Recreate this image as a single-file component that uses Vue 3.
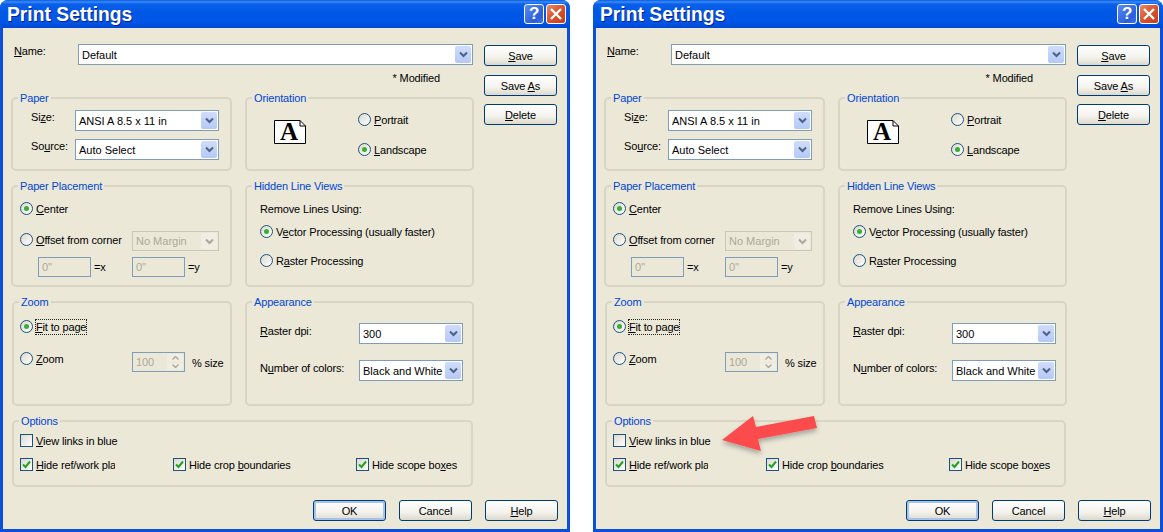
<script setup>
const dialogs = [{ id: 1, arrow: false }, { id: 2, arrow: true }]
</script>

<template>
  <div class="page">
    <section v-for="d in dialogs" :key="d.id" class="window">
      <header class="titlebar">
        <h1 class="title">Print Settings</h1>
        <div class="caption-btn help-btn">?</div>
        <div class="caption-btn close-btn">
          <svg width="14" height="14" viewBox="0 0 14 14"><path d="M2 2 L12 12 M12 2 L2 12" stroke="#fff" stroke-width="2.4" fill="none" /></svg>
        </div>
      </header>

      <div class="client">
        <div class="main">
          <div class="left">
            <div class="name-row">
              <span class="name-label"><u>N</u>ame:</span>
              <div class="combo name-combo"><span>Default</span><i class="drop"><svg width="9" height="7" viewBox="0 0 9 7"><path d="M1 1.5 L4.5 5 L8 1.5" /></svg></i></div>
            </div>
            <div class="modified">* Modified</div>

            <div class="groups">
              <fieldset class="group">
                <legend>Paper</legend>
                <div class="paper">
                  <div class="field-row">
                    <span class="field-label">Si<u>z</u>e:</span>
                    <div class="combo w144"><span>ANSI A 8.5 x 11 in</span><i class="drop"><svg width="9" height="7" viewBox="0 0 9 7"><path d="M1 1.5 L4.5 5 L8 1.5" /></svg></i></div>
                  </div>
                  <div class="field-row">
                    <span class="field-label">So<u>u</u>rce:</span>
                    <div class="combo w144"><span>Auto Select</span><i class="drop"><svg width="9" height="7" viewBox="0 0 9 7"><path d="M1 1.5 L4.5 5 L8 1.5" /></svg></i></div>
                  </div>
                </div>
              </fieldset>

              <fieldset class="group">
                <legend>Orientation</legend>
                <div class="orientation">
                  <svg class="sheet" width="32" height="24" viewBox="0 0 32 24">
                    <path d="M.5.5H26L31.5 6V23.5H.5Z" fill="#fff" stroke="#000" />
                    <path d="M26 .5V6H31.5" fill="none" stroke="#000" />
                    <text x="15" y="19.5" text-anchor="middle" class="sheet-letter">A</text>
                  </svg>
                  <div class="orient-radios">
                    <label class="radio"><span class="dot"></span><span><u>P</u>ortrait</span></label>
                    <label class="radio"><span class="dot on"></span><span><u>L</u>andscape</span></label>
                  </div>
                </div>
              </fieldset>

              <fieldset class="group">
                <legend>Paper Placement</legend>
                <div class="placement">
                  <label class="radio"><span class="dot on"></span><span><u>C</u>enter</span></label>
                  <div class="offset-row">
                    <label class="radio offset-radio"><span class="dot"></span><span><u>O</u>ffset from corner</span></label>
                    <div class="combo disabled w87"><span>No Margin</span><i class="drop"><svg width="9" height="7" viewBox="0 0 9 7"><path d="M1 1.5 L4.5 5 L8 1.5" /></svg></i></div>
                  </div>
                  <div class="xy-row">
                    <div class="entry">0''</div><span class="xy-label">=x</span>
                    <div class="entry">0''</div><span class="xy-label">=y</span>
                  </div>
                </div>
              </fieldset>

              <fieldset class="group">
                <legend>Hidden Line Views</legend>
                <div class="hidden-lines">
                  <div class="remove-label">Remove Lines Using:</div>
                  <label class="radio vector"><span class="dot on"></span><span>V<u>e</u>ctor Processing (usually faster)</span></label>
                  <label class="radio raster"><span class="dot"></span><span>R<u>a</u>ster Processing</span></label>
                </div>
              </fieldset>

              <fieldset class="group inset">
                <legend>Zoom</legend>
                <div class="zoom">
                  <label class="radio"><span class="dot on"></span><span class="focus"><u>F</u>it to page</span></label>
                  <div class="zoom-row">
                    <label class="radio zoom-radio"><span class="dot"></span><span><u>Z</u>oom</span></label>
                    <div class="entry spinner">
                      <span>100</span>
                      <div class="spin">
                        <i><svg width="7" height="4" viewBox="0 0 7 4"><path d="M.5 3.5 L3.5 .5 L6.5 3.5" /></svg></i>
                        <i><svg width="7" height="4" viewBox="0 0 7 4"><path d="M.5 .5 L3.5 3.5 L6.5 .5" /></svg></i>
                      </div>
                    </div>
                    <span class="size-label">% size</span>
                  </div>
                </div>
              </fieldset>

              <fieldset class="group">
                <legend>Appearance</legend>
                <div class="appearance">
                  <div class="app-row">
                    <span class="app-label"><u>R</u>aster dpi:</span>
                    <div class="combo w104"><span>300</span><i class="drop"><svg width="9" height="7" viewBox="0 0 9 7"><path d="M1 1.5 L4.5 5 L8 1.5" /></svg></i></div>
                  </div>
                  <div class="app-row">
                    <span class="app-label">N<u>u</u>mber of colors:</span>
                    <div class="combo w104"><span>Black and White</span><i class="drop"><svg width="9" height="7" viewBox="0 0 9 7"><path d="M1 1.5 L4.5 5 L8 1.5" /></svg></i></div>
                  </div>
                </div>
              </fieldset>

              <fieldset class="group inset options-group">
                <legend>Options</legend>
                <div class="options">
                  <label class="check"><span class="box"></span><span><u>V</u>iew links in blue</span></label>
                  <div class="check-grid">
                    <label class="check"><span class="box"><svg width="11" height="11" viewBox="0 0 11 11"><path d="M2 5.5 L4.5 8 L9 2.5" /></svg></span><span class="clip"><u>H</u>ide ref/work planes</span></label>
                    <label class="check"><span class="box"><svg width="11" height="11" viewBox="0 0 11 11"><path d="M2 5.5 L4.5 8 L9 2.5" /></svg></span><span>Hide crop <u>b</u>oundaries</span></label>
                    <label class="check"><span class="box"><svg width="11" height="11" viewBox="0 0 11 11"><path d="M2 5.5 L4.5 8 L9 2.5" /></svg></span><span>Hide scope bo<u>x</u>es</span></label>
                  </div>
                </div>
              </fieldset>
            </div>
          </div>

          <div class="side-buttons">
            <button class="btn"><u>S</u>ave</button>
            <button class="btn">Save <u>A</u>s</button>
            <button class="btn"><u>D</u>elete</button>
          </div>
        </div>

        <footer class="footer">
          <button class="btn default">OK</button>
          <button class="btn">Cancel</button>
          <button class="btn"><u>H</u>elp</button>
        </footer>
      </div>

      <svg v-if="d.arrow" class="arrow" width="110" height="50" viewBox="0 0 110 50">
        <defs>
          <filter id="arrow-shadow" x="-20%" y="-30%" width="140%" height="170%">
            <feDropShadow dx="0" dy="3" stdDeviation="2.5" flood-color="#000" flood-opacity=".3" />
          </filter>
        </defs>
        <path d="M2 26 L33 2 L36 13 L94 2 L97 14 L38 25 L41 37 Z" fill="#fb4b4e" filter="url(#arrow-shadow)" />
      </svg>
    </section>
  </div>
</template>

<style>
html, body { background: #fff; overflow: hidden; }
</style>

<style scoped>
.page {
  width: 1163px;
  height: 532px;
  display: flex;
  justify-content: space-between;
  font: 11px/14px "Liberation Sans", Arial, sans-serif;
  letter-spacing: -0.15px;
  color: #000;
  background: #fff;
}
.window {
  position: relative;
  width: 570px;
  height: 532px;
  display: flex;
  flex-direction: column;
  background: #0a4fdd;
  border-radius: 8px 8px 0 0;
  overflow: hidden;
}
.titlebar {
  height: 28px;
  flex: none;
  display: flex;
  align-items: center;
  gap: 2px;
  padding: 2px 4px 0 7px;
  box-sizing: border-box;
  background: linear-gradient(#0a5ae6 0, #3a8cf6 2px, #0a60ea 4px, #0058e6 12px, #0055e5 22px, #0048d6 28px);
}
.title {
  flex: 1;
  margin: 0;
  font: bold 19.3px/24px "Liberation Sans", Arial, sans-serif;
  letter-spacing: 0;
  color: #fff;
  text-shadow: 1px 1px 0 #0c1f8c;
}
.caption-btn {
  width: 20px;
  height: 20px;
  margin-top: -2px;
  box-sizing: border-box;
  border: 1px solid #fff;
  border-radius: 3px;
  display: flex;
  align-items: center;
  justify-content: center;
  color: #fff;
}
.help-btn {
  background: linear-gradient(135deg, #5a8cf2, #2a5fdc 70%, #3e74e6);
  font: bold 17px/18px "Liberation Sans", Arial, sans-serif;
}
.close-btn { background: linear-gradient(135deg, #ea8a66, #d8542e 50%, #c43d18); }
.client {
  flex: 1;
  margin: 0 3px 3px;
  background: #ebe8d8;
  padding: 16px 9px 8px 8px;
  display: flex;
  flex-direction: column;
  justify-content: space-between;
}
.main {
  display: grid;
  grid-template-columns: 463px 73px;
  column-gap: 10px;
}
.name-row { display: flex; height: 21px; }
.name-label { width: 64px; margin-left: 3px; }
.name-combo { flex: 1; margin-right: 1px; }
.modified { height: 26px; padding: 6px 34px 0 0; box-sizing: border-box; text-align: right; }

.combo {
  box-sizing: border-box;
  height: 21px;
  display: flex;
  align-items: center;
  justify-content: space-between;
  padding: 1px 1px 1px 3px;
  background: #fff;
  border: 1px solid #7f9db9;
  white-space: nowrap;
  letter-spacing: 0;
}
.w144 { width: 144px; }
.w104 { width: 104px; }
.w87 { width: 87px; height: 20px; }
.drop {
  flex: none;
  width: 16px;
  align-self: stretch;
  display: flex;
  align-items: center;
  justify-content: center;
  border-radius: 2px;
  background: linear-gradient(#d0dcfb, #b5c9f7);
}
.drop path { fill: none; stroke: #4d6185; stroke-width: 2; }
.combo.disabled { background: #ebe8d8; border-color: #c9c7ba; color: #aca899; }
.combo.disabled .drop { background: #f0eee2; }
.combo.disabled .drop path { stroke: #aca899; }

.groups {
  display: grid;
  grid-template-columns: 221px 229px;
  grid-template-rows: 80px 108px 111px 73px;
  column-gap: 13px;
  row-gap: 8px;
}
.group {
  margin: 0;
  min-width: 0;
  padding: 0;
  box-sizing: border-box;
  border: 2px solid #d8d5c4;
  border-radius: 5px;
}
legend {
  margin-left: 5px;
  padding: 0 2px;
  color: #0046d5;
  line-height: 14px;
}
.inset { margin-left: 1px; }

.paper { padding: 5px 0 0 18px; }
.field-row { display: flex; height: 21px; margin-bottom: 8px; }
.field-label { width: 44px; line-height: 14px; }

.orientation { padding-left: 27px; display: flex; align-items: flex-start; }
.sheet { margin-top: 15px; flex: none; overflow: visible; }
.sheet-letter { font: bold 25px "Liberation Serif", serif; fill: #000; letter-spacing: 0; }
.orient-radios { margin: 7px 0 0 52px; display: flex; flex-direction: column; gap: 15px; }

.radio, .check { display: flex; align-items: center; gap: 3px; height: 15px; white-space: nowrap; }
.dot {
  flex: none;
  width: 13px;
  height: 13px;
  box-sizing: border-box;
  border: 1px solid #1c5180;
  border-radius: 50%;
  background: linear-gradient(135deg, #dcd8cb, #fff);
  display: flex;
  align-items: center;
  justify-content: center;
}
.dot.on::after {
  content: "";
  width: 5px;
  height: 5px;
  border-radius: 50%;
  background: #35b035;
}
.box {
  flex: none;
  width: 13px;
  height: 13px;
  box-sizing: border-box;
  border: 1px solid #1c5180;
  background: linear-gradient(135deg, #dcd8cb, #fff);
  display: flex;
  align-items: center;
  justify-content: center;
}
.box path { fill: none; stroke: #21a121; stroke-width: 2; }

.placement { padding: 8px 0 0 7px; }
.offset-row { display: flex; align-items: flex-start; margin-top: 15px; height: 20px; }
.offset-radio { width: 112px; margin-top: 1px; }
.xy-row { display: flex; align-items: center; margin: 6px 0 0 18px; }
.entry {
  box-sizing: border-box;
  width: 53px;
  height: 20px;
  padding: 1px 3px;
  line-height: 16px;
  border: 1px solid #7f9db9;
  color: #aca899;
}
.xy-label { width: 41px; padding-left: 3px; box-sizing: border-box; }

.hidden-lines { padding: 9px 0 0 13px; }
.vector { margin-top: 8px; }
.raster { margin-top: 14px; }

.zoom { padding: 10px 0 0 6px; }
.focus { outline: 1px dotted #222; outline-offset: 0; }
.zoom-row { display: flex; align-items: flex-start; margin-top: 17px; }
.zoom-radio { width: 112px; }
.spinner { display: flex; justify-content: space-between; padding: 1px 1px 1px 3px; margin-top: 1px; }
.spin { width: 16px; display: flex; flex-direction: column; gap: 1px; }
.spin i {
  flex: 1;
  display: flex;
  align-items: center;
  justify-content: center;
  background: #f0eee2;
}
.spin path { fill: none; stroke: #aca899; stroke-width: 1.4; }
.size-label { margin: 5px 0 0 7px; }

.appearance { padding: 14px 0 0 13px; }
.app-row { display: flex; height: 21px; margin-bottom: 16px; }
.app-label { width: 99px; line-height: 14px; padding-top: 1px; }

.options-group { grid-column: 1 / -1; margin-right: 1px; }
.options { padding: 5px 0 0 6px; }
.check-grid { display: grid; grid-template-columns: 153px 183px 1fr; margin-top: 9px; }
.clip { width: 79px; overflow: hidden; }

.side-buttons { display: flex; flex-direction: column; gap: 8px; padding-top: 1px; }
.side-buttons .btn:first-child { margin-bottom: 1px; }
.btn {
  width: 73px;
  height: 21px;
  padding: 0;
  box-sizing: border-box;
  border: 1px solid #003c74;
  border-radius: 3px;
  background: linear-gradient(#fff, #f3f2ec 60%, #dcd8cc);
  font: inherit;
  letter-spacing: inherit;
  color: inherit;
}
.btn.default { box-shadow: inset 0 0 0 2px #a8c2ee; }
.footer { display: flex; justify-content: flex-end; gap: 13px; }

.arrow { position: absolute; left: 127px; top: 414px; }
</style>
